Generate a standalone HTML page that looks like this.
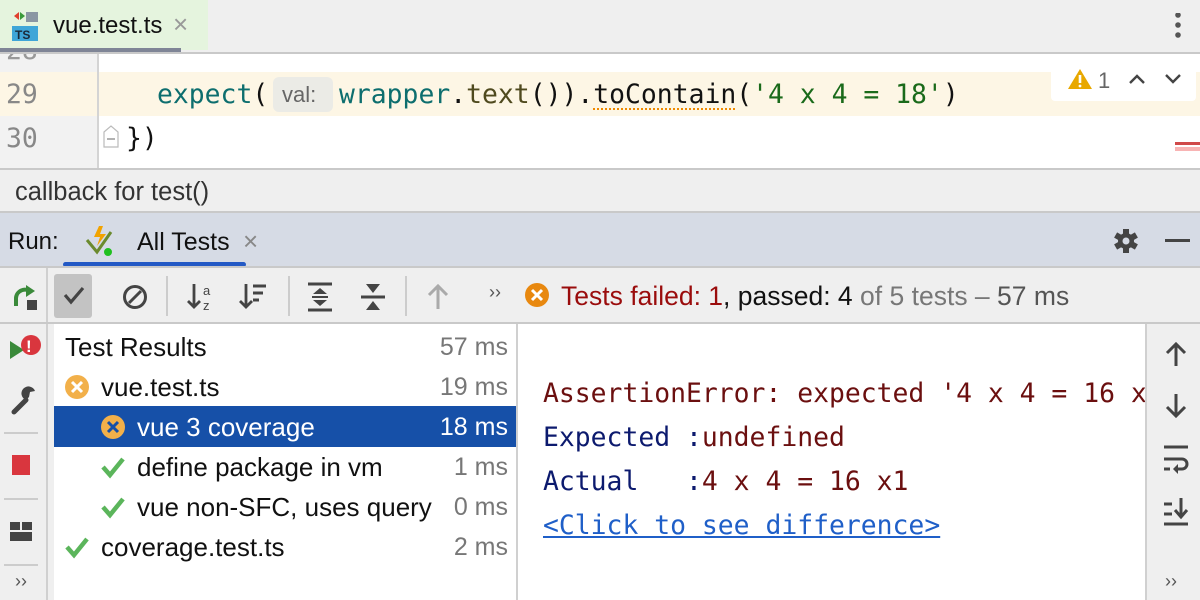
<!DOCTYPE html>
<html><head><meta charset="utf-8"><style>
*{margin:0;padding:0;box-sizing:border-box}
body{width:1200px;height:600px;overflow:hidden;background:#efefef;font-family:"Liberation Sans",sans-serif;position:relative}
.a{position:absolute}
.mono{font-family:"DejaVu Sans Mono","Liberation Mono",monospace;font-size:26.4px;white-space:pre;line-height:30px}
.t{font-size:26px;white-space:nowrap;line-height:28px}
.ms{position:absolute;right:8px;color:#777;font-size:25px;line-height:28px}
</style></head><body>
<!-- tab bar -->
<div class="a" style="left:0;top:0;width:208px;height:50px;background:#e5f4de"></div>
<div class="a" style="left:0;top:48px;width:181px;height:5px;background:#7f8596"></div>
<div class="a" style="left:0;top:52px;width:1200px;height:2px;background:#c9c9c9"></div>
<svg class="a" style="left:12px;top:11px" width="28" height="32"><path d="M2 5l5-4v8z" fill="#e0402e"/><path d="M8 1l5 4-5 4z" fill="#3a9a3a"/><rect x="14" y="1" width="12" height="10" fill="#8a96a3"/><rect x="0" y="15" width="26" height="15" fill="#3fa6d8"/><text x="3" y="28" font-size="12" font-weight="bold" fill="#1b2a3a" font-family="Liberation Sans">TS</text></svg>
<div class="a t" style="left:53px;top:12px;color:#111;font-size:24px">vue.test.ts</div>
<div class="a" style="left:173px;top:9px;font-size:26px;color:#999">×</div>
<svg class="a" style="left:1173px;top:13px" width="10" height="28"><circle cx="5" cy="2" r="2.8" fill="#555"/><circle cx="5" cy="12" r="2.8" fill="#555"/><circle cx="5" cy="22" r="2.8" fill="#555"/></svg>
<!-- editor -->
<div class="a" style="left:0;top:54px;width:1200px;height:114px;background:#fff;overflow:hidden">
  <div class="a" style="left:0;top:0;width:97px;height:114px;background:#f2f2f2"></div>
  <div class="a" style="left:0;top:18px;width:1200px;height:44px;background:#fdf6e5"></div>
  <div class="a" style="left:97px;top:0;width:2px;height:114px;background:#d4d4d4"></div>
  <div class="a mono" style="left:6px;top:-18px;color:#999">28</div>
</div>
<div class="a mono" style="left:6px;top:80px;color:#888">29</div>
<div class="a mono" style="left:6px;top:124px;color:#888">30</div>
<div class="a mono" style="left:157px;top:80px;color:#0d6e6e">expect<span style="color:#111">(</span></div>
<div class="a" style="left:273px;top:77px;width:60px;height:35px;background:#ebebe6;border-radius:6px;font-size:22px;color:#666;padding:5px 0 0 9px">val:</div>
<div class="a mono" style="left:339px;top:80px;color:#0d6e6e">wrapper<span style="color:#111">.</span><span style="color:#4f4a1e">text</span><span style="color:#111">()).</span><span style="color:#111;text-decoration:underline dotted #f08a00 2px;text-underline-offset:5px">toContain</span><span style="color:#111">(</span><span style="color:#1a6a1a">'4 x 4 = 18'</span><span style="color:#111">)</span></div>
<div class="a mono" style="left:126px;top:124px;color:#111">})</div>
<svg class="a" style="left:103px;top:125px" width="16" height="24"><path d="M1 7l7-6 7 6v15H1z" fill="#fff" stroke="#bbb" stroke-width="1.2"/><path d="M4 14h8" stroke="#999" stroke-width="1.5"/></svg>
<div class="a" style="left:1051px;top:61px;width:145px;height:40px;background:#fff;border-radius:4px"></div>
<svg class="a" style="left:1067px;top:67px" width="26" height="24"><path d="M13 2L25 22H1z" fill="#e8a800"/><path d="M13 8v8" stroke="#fff" stroke-width="2.6"/><circle cx="13" cy="19" r="1.4" fill="#fff"/></svg>
<div class="a" style="left:1098px;top:68px;font-size:22px;color:#666">1</div>
<svg class="a" style="left:1127px;top:72px" width="20" height="14"><path d="M3 11l7-7 7 7" fill="none" stroke="#444" stroke-width="2.4"/></svg>
<svg class="a" style="left:1163px;top:72px" width="20" height="14"><path d="M3 3l7 7 7-7" fill="none" stroke="#444" stroke-width="2.4"/></svg>
<div class="a" style="left:1175px;top:142px;width:25px;height:3px;background:#d04a4a"></div>
<div class="a" style="left:1175px;top:147px;width:25px;height:4px;background:#f8b4b4"></div>
<div class="a" style="left:0;top:168px;width:1200px;height:2px;background:#c9c9c9"></div>
<!-- breadcrumb -->
<div class="a t" style="left:15px;top:178px;color:#333;font-size:25.5px">callback for test()</div>
<div class="a" style="left:0;top:211px;width:1200px;height:2px;background:#c9c9c9"></div>
<!-- run bar -->
<div class="a" style="left:0;top:213px;width:1200px;height:53px;background:#d6dbe5"></div>
<div class="a t" style="left:8px;top:228px;color:#111;font-size:24px">Run:</div>
<svg class="a" style="left:83px;top:224px" width="48" height="34"><path d="M4 16l10 12 14-20" fill="none" stroke="#6b8a2e" stroke-width="3"/><path d="M16 2l-5 11h6l-3 9 9-12h-6l3-8z" fill="#f2a300"/><circle cx="25" cy="28" r="4.5" fill="#20c020" stroke="#d6dbe5" stroke-width="1"/></svg>
<div class="a t" style="left:137px;top:228px;color:#111;font-size:25px">All Tests</div>
<div class="a" style="left:243px;top:226px;font-size:26px;color:#888">×</div>
<div class="a" style="left:63px;top:262px;width:183px;height:5px;background:#2359c5;border-radius:3px"></div>
<svg class="a" style="left:1113px;top:227px" width="26" height="28"><g transform="translate(13,14)" fill="#444"><circle r="8"/><rect x="-3" y="-12" width="6" height="24"/><rect x="-3" y="-12" width="6" height="24" transform="rotate(60)"/><rect x="-3" y="-12" width="6" height="24" transform="rotate(120)"/><circle r="3.5" fill="#d6dbe5"/></g></svg>
<div class="a" style="left:1165px;top:239px;width:25px;height:3px;background:#444"></div>
<div class="a" style="left:0;top:266px;width:1200px;height:2px;background:#c9c9c9"></div>
<!-- left strip -->
<div class="a" style="left:46px;top:268px;width:2px;height:332px;background:#d0d0d0"></div>
<svg class="a" style="left:10px;top:282px" width="30" height="30"><path d="M6 24V16a9 9 0 0 1 15-6" fill="none" stroke="#3a8a3a" stroke-width="4"/><path d="M16 3l9 6-9 6z" fill="#3a8a3a"/><rect x="17" y="18" width="10" height="10" fill="#444"/></svg>
<svg class="a" style="left:8px;top:333px" width="34" height="32"><path d="M2 8l14 9-14 9z" fill="#3a8a3a"/><circle cx="23" cy="12" r="10" fill="#d9363e"/><text x="18" y="19" font-size="17" font-weight="bold" fill="#fff" font-family="Liberation Sans">!</text></svg>
<svg class="a" style="left:9px;top:386px" width="30" height="30"><path d="M5 26L17 14" stroke="#444" stroke-width="5" stroke-linecap="round"/><path d="M17 14a7 7 0 1 1 9-9l-5 1-1 5-3 3z" fill="#444"/></svg>
<div class="a" style="left:4px;top:432px;width:34px;height:2px;background:#ccc"></div>
<div class="a" style="left:12px;top:455px;width:18px;height:20px;background:#d9363e"></div>
<div class="a" style="left:4px;top:498px;width:34px;height:2px;background:#ccc"></div>
<div class="a" style="left:10px;top:522px;width:10px;height:8px;background:#444"></div>
<div class="a" style="left:22px;top:522px;width:10px;height:8px;background:#444"></div>
<div class="a" style="left:10px;top:532px;width:22px;height:9px;background:#444"></div>
<div class="a" style="left:4px;top:564px;width:34px;height:2px;background:#ccc"></div>
<div class="a" style="left:15px;top:571px;font-size:18px;color:#555">››</div>
<!-- toolbar -->
<div class="a" style="left:54px;top:274px;width:38px;height:44px;background:#c3c3c3;border-radius:3px"></div>
<svg class="a" style="left:62px;top:284px" width="24" height="22"><path d="M3 11l6 7L21 4" fill="none" stroke="#444" stroke-width="3.2"/></svg>
<svg class="a" style="left:121px;top:283px" width="28" height="28"><circle cx="14" cy="14" r="10.5" fill="none" stroke="#444" stroke-width="3"/><path d="M8 20L20 8" stroke="#444" stroke-width="3"/></svg>
<div class="a" style="left:166px;top:276px;width:2px;height:40px;background:#ccc"></div>
<svg class="a" style="left:186px;top:281px" width="32" height="32"><path d="M8 3v23M2 20l6 6 6-6" fill="none" stroke="#444" stroke-width="2.8"/><text x="17" y="14" font-size="13" fill="#444" font-family="Liberation Sans">a</text><text x="17" y="29" font-size="13" fill="#444" font-family="Liberation Sans">z</text></svg>
<svg class="a" style="left:238px;top:281px" width="32" height="32"><path d="M8 3v23M2 20l6 6 6-6" fill="none" stroke="#444" stroke-width="2.8"/><path d="M15 5h13M15 12h10M15 19h6" stroke="#444" stroke-width="3"/></svg>
<div class="a" style="left:288px;top:276px;width:2px;height:40px;background:#ccc"></div>
<svg class="a" style="left:306px;top:281px" width="28" height="32"><path d="M2 3h24M2 29h24" stroke="#444" stroke-width="3"/><path d="M14 7l-7 6h14zM14 25l-7-6h14z" fill="#444"/><path d="M6 16h16" stroke="#444" stroke-width="2"/></svg>
<svg class="a" style="left:359px;top:281px" width="28" height="32"><path d="M14 12l-7-9h14zM14 20l-7 9h14z" fill="#444"/><path d="M2 16h24" stroke="#444" stroke-width="3"/></svg>
<div class="a" style="left:405px;top:276px;width:2px;height:40px;background:#ccc"></div>
<svg class="a" style="left:426px;top:282px" width="24" height="28"><path d="M12 27V4M3 13l9-9 9 9" fill="none" stroke="#aaa" stroke-width="3"/></svg>
<div class="a" style="left:489px;top:282px;font-size:18px;color:#555">››</div>
<svg class="a" style="left:524px;top:282px" width="26" height="26"><circle cx="13" cy="13" r="12" fill="#e8880f"/><path d="M8 8l10 10M18 8L8 18" stroke="#fff" stroke-width="3"/></svg>
<div class="a t" style="left:561px;top:282px;color:#9a0c0c;font-size:26.5px">Tests failed: 1<span style="color:#111">, passed: 4 </span><span style="color:#777">of 5 tests – </span><span style="color:#555">57 ms</span></div>
<div class="a" style="left:0;top:322px;width:1200px;height:2px;background:#c9c9c9"></div>
<!-- tree -->
<div class="a" style="left:54px;top:324px;width:462px;height:276px;background:#fff">
  <div class="a" style="left:0;top:82px;width:462px;height:41px;background:#1650a8"></div>
  <div class="a t" style="left:11px;top:9px;color:#111">Test Results</div><div class="ms" style="top:9px">57 ms</div>
  <svg class="a" style="left:10px;top:50px" width="26" height="26"><circle cx="13" cy="13" r="12" fill="#f2b04a"/><path d="M8 8l10 10M18 8L8 18" stroke="#fff" stroke-width="3"/></svg>
  <div class="a t" style="left:47px;top:49px;color:#111">vue.test.ts</div><div class="ms" style="top:49px">19 ms</div>
  <svg class="a" style="left:46px;top:90px" width="26" height="26"><circle cx="13" cy="13" r="12" fill="#f2b04a"/><path d="M8 8l10 10M18 8L8 18" stroke="#1650a8" stroke-width="3"/></svg>
  <div class="a t" style="left:83px;top:89px;color:#fff">vue 3 coverage</div><div class="ms" style="top:89px;color:#fff">18 ms</div>
  <svg class="a" style="left:46px;top:131px" width="26" height="24"><path d="M3 12l7 8L23 4" fill="none" stroke="#5bb55b" stroke-width="4.5"/></svg>
  <div class="a t" style="left:83px;top:129px;color:#111">define package in vm</div><div class="ms" style="top:129px">1 ms</div>
  <svg class="a" style="left:46px;top:171px" width="26" height="24"><path d="M3 12l7 8L23 4" fill="none" stroke="#5bb55b" stroke-width="4.5"/></svg>
  <div class="a t" style="left:83px;top:169px;color:#111">vue non-SFC, uses query</div><div class="ms" style="top:169px">0 ms</div>
  <svg class="a" style="left:10px;top:211px" width="26" height="24"><path d="M3 12l7 8L23 4" fill="none" stroke="#5bb55b" stroke-width="4.5"/></svg>
  <div class="a t" style="left:47px;top:209px;color:#111">coverage.test.ts</div><div class="ms" style="top:209px">2 ms</div>
</div>
<div class="a" style="left:516px;top:324px;width:2px;height:276px;background:#d0d0d0"></div>
<!-- console -->
<div class="a" style="left:518px;top:324px;width:627px;height:276px;background:#fff;overflow:hidden">
  <div class="a mono" style="left:25px;top:55px;color:#6b0f0f">AssertionError: expected '4 x 4 = 16 x1'</div>
  <div class="a mono" style="left:25px;top:99px;color:#0c1a6e">Expected :<span style="color:#6b0f0f">undefined</span></div>
  <div class="a mono" style="left:25px;top:143px;color:#0c1a6e">Actual   :<span style="color:#6b0f0f">4 x 4 = 16 x1</span></div>
  <div class="a mono" style="left:25px;top:187px;color:#1f5fc8;text-decoration:underline">&lt;Click to see difference&gt;</div>
</div>
<div class="a" style="left:1145px;top:324px;width:2px;height:276px;background:#d0d0d0"></div>
<!-- right strip -->
<svg class="a" style="left:1164px;top:340px" width="24" height="28"><path d="M12 26V4M3 13l9-9 9 9" fill="none" stroke="#444" stroke-width="3"/></svg>
<svg class="a" style="left:1164px;top:392px" width="24" height="28"><path d="M12 2v22M3 15l9 9 9-9" fill="none" stroke="#444" stroke-width="3"/></svg>
<svg class="a" style="left:1162px;top:444px" width="28" height="30"><path d="M2 3h24M2 15h18a5 5 0 0 1 0 10h-6M2 25h6" fill="none" stroke="#444" stroke-width="3"/><path d="M16 20l-5 5 5 5z" fill="#444"/></svg>
<svg class="a" style="left:1162px;top:496px" width="28" height="30"><path d="M2 28h24M2 8h8M2 18h8M19 2v18M13 14l6 7 6-7" fill="none" stroke="#444" stroke-width="3"/></svg>
<div class="a" style="left:1165px;top:571px;font-size:18px;color:#555">››</div>
</body></html>
